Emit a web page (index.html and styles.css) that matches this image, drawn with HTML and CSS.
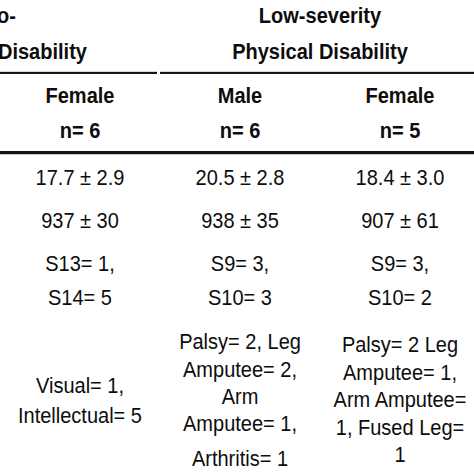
FILE: index.html
```html
<!DOCTYPE html>
<html lang="en">
<head>
<meta charset="utf-8">
<title>Participant characteristics</title>
<link rel="stylesheet" href="styles.css">
</head>
<body>
<div class="table">
  <div class="groups">
    <div class="group group-clipped">
      <span class="clip-line clip-a">o-</span>
      <span class="clip-line clip-b">Disability</span>
    </div>
    <div class="group group-main">Low-severity<br>Physical Disability</div>
  </div>
  <div class="sub">
    <div class="cell">Female<br>n= 6</div>
    <div class="cell">Male<br>n= 6</div>
    <div class="cell">Female<br>n= 5</div>
  </div>
  <div class="body">
    <div class="row">
      <div class="cell">17.7 ± 2.9</div>
      <div class="cell">20.5 ± 2.8</div>
      <div class="cell">18.4 ± 3.0</div>
    </div>
    <div class="row">
      <div class="cell">937 ± 30</div>
      <div class="cell">938 ± 35</div>
      <div class="cell">907 ± 61</div>
    </div>
    <div class="row">
      <div class="cell">S13= 1,<br>S14= 5</div>
      <div class="cell">S9= 3,<br>S10= 3</div>
      <div class="cell">S9= 3,<br>S10= 2</div>
    </div>
    <div class="row row-last">
      <div class="cell c1">Visual= 1,<br>Intellectual= 5</div>
      <div class="cell c2">
        <p class="para">Palsy= 2, Leg Amputee= 2, Arm Amputee= 1,</p>
        <p class="para para-gap">Arthritis= 1</p>
      </div>
      <div class="cell c3">Palsy= 2 Leg Amputee= 1, Arm Amputee= 1, Fused Leg= 1</div>
    </div>
  </div>
</div>
</body>
</html>
```
FILE: styles.css
```css
html, body {
  margin: 0;
  padding: 0;
  background: #fff;
  overflow: hidden;
}
body {
  width: 474px;
  height: 474px;
  font-family: "Liberation Sans", Arial, sans-serif;
  font-size: 20px;
  color: #0d0d0d;
}
/* the source table is rendered slightly taller than wide */
.table {
  width: 480px;
  margin-top: -2.2px;
  transform: scaleY(1.07);
  transform-origin: 0 0;
}
.groups {
  display: grid;
  grid-template-columns: 160px 320px;
  font-weight: bold;
  line-height: 33.6px;
}
.group {
  padding-bottom: 1.4px;
  border-bottom: 2.8px solid #111;
}
.group-clipped {
  display: flex;
  flex-direction: column;
  align-items: flex-start;
  overflow: hidden;
  margin-right: 3px;
}
.clip-a { margin-left: -3px; }
.clip-b { margin-left: -2px; }
.group-main {
  text-align: center;
}
.sub {
  display: grid;
  grid-template-columns: 160px 160px 160px;
  font-weight: bold;
  line-height: 32.7px;
  padding-top: 4.7px;
  padding-bottom: 2.8px;
  border-bottom: 3.7px solid #111;
}
.cell {
  text-align: center;
}
.body {
  display: flex;
  flex-direction: column;
  gap: 8.4px;
  padding-top: 6.2px;
  line-height: 31.8px;
}
.row {
  display: grid;
  grid-template-columns: 160px 160px 160px;
  align-items: center;
}
.row-last {
  margin-top: 3.8px;
  line-height: 25.7px;
}
.c1 { line-height: 28px; }
.c2 { padding: 0 16px; }
.c3 { padding: 0 10px; }
.para { margin: 0; }
.para-gap { margin-top: 6.5px; }
```
